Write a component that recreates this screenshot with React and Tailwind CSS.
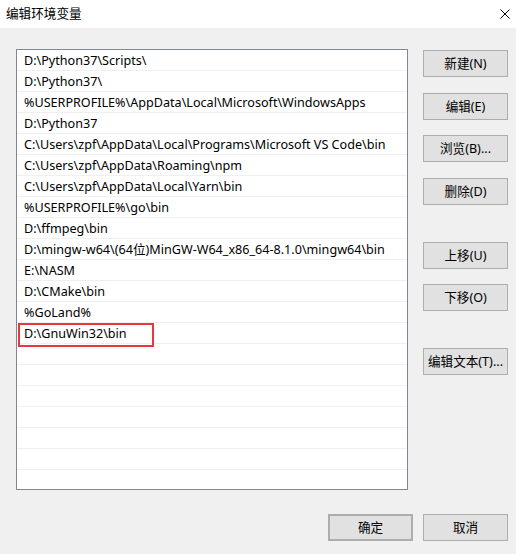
const paths = [
  'D:\\Python37\\Scripts\\',
  'D:\\Python37\\',
  '%USERPROFILE%\\AppData\\Local\\Microsoft\\WindowsApps',
  'D:\\Python37',
  'C:\\Users\\zpf\\AppData\\Local\\Programs\\Microsoft VS Code\\bin',
  'C:\\Users\\zpf\\AppData\\Roaming\\npm',
  'C:\\Users\\zpf\\AppData\\Local\\Yarn\\bin',
  '%USERPROFILE%\\go\\bin',
  'D:\\ffmpeg\\bin',
  'D:\\mingw-w64\\(64位)MinGW-W64_x86_64-8.1.0\\mingw64\\bin',
  'E:\\NASM',
  'D:\\CMake\\bin',
  '%GoLand%',
  'D:\\GnuWin32\\bin',
];

const rows = [...paths, ...Array(7).fill('')];

const font = { fontFamily: '"Noto Sans", "Noto Sans CJK SC", sans-serif' };

const Btn = ({ children, className = '' }) => (
  <button className={`w-[85px] h-[27px] bg-[#e1e1e1] border border-[#adadad] text-[12.6px] text-black flex items-center justify-center pt-[1px] ${className}`}>
    {children}
  </button>
);

const App = () => {
  return (
    <div className="w-[516px] h-[554px] bg-[#f0f0f0] flex flex-col text-black overflow-hidden" style={font}>
      <div className="h-[28px] bg-white flex items-center justify-between pl-[6px] pr-[4px]">
        <span className="text-[12.6px]">编辑环境变量</span>
        <svg width="12" height="12" viewBox="0 0 12 12" className="mr-[1px]">
          <path d="M1.5 1.5L10.5 10.5M10.5 1.5L1.5 10.5" stroke="#000" strokeWidth="1" />
        </svg>
      </div>

      <div className="flex pl-[16px] pt-[21px]">
        <div className="w-[392px] h-[441px] border border-[#828790] bg-white overflow-hidden">
          {rows.map((p, i) => (
            <div key={i} className="relative h-[21px] border-b border-[#efefef] pl-[7px] pt-[2px] flex items-center text-[12.6px] whitespace-nowrap">
              {p}
              {i === 13 && (
                <div className="absolute left-[1px] top-0 w-[136px] h-[24px] border-2 border-[#e8383d]" />
              )}
            </div>
          ))}
        </div>

        <div className="flex flex-col ml-[15px] pt-[1px]">
          <Btn>新建(N)</Btn>
          <Btn className="mt-[16px]">编辑(E)</Btn>
          <Btn className="mt-[15px]">浏览(B)...</Btn>
          <Btn className="mt-[16px]">删除(D)</Btn>
          <Btn className="mt-[37px]">上移(U)</Btn>
          <Btn className="mt-[15px]">下移(O)</Btn>
          <Btn className="mt-[37px]">编辑文本(T)...</Btn>
        </div>
      </div>

      <div className="flex justify-end pr-[8px] mt-[24px] gap-[10px]">
        <Btn className="border-2 border-[#0078d7]">确定</Btn>
        <Btn>取消</Btn>
      </div>
    </div>
  );
};

export default App;
